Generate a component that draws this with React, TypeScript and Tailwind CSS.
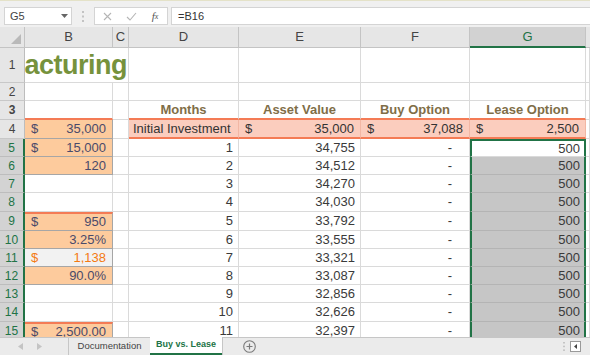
import React from 'react';

const font = "font-['Liberation_Sans',Arial,sans-serif]";

type RowDef = {
  n: number;
  h: string;
  b?: { kind: 'acc' | 'num'; v: string; style: 'in' | 'calc'; topRed?: boolean } | null;
  d?: string;
  e?: string;
};

const rows: RowDef[] = [
  { n: 5, h: 'h-[18px]', b: { kind: 'acc', v: '15,000', style: 'in' }, d: '1', e: '34,755' },
  { n: 6, h: 'h-[18px]', b: { kind: 'num', v: '120', style: 'in' }, d: '2', e: '34,512' },
  { n: 7, h: 'h-[18px]', b: null, d: '3', e: '34,270' },
  { n: 8, h: 'h-[19px]', b: null, d: '4', e: '34,030' },
  { n: 9, h: 'h-[19px]', b: { kind: 'acc', v: '950', style: 'in', topRed: true }, d: '5', e: '33,792' },
  { n: 10, h: 'h-[18px]', b: { kind: 'num', v: '3.25%', style: 'in' }, d: '6', e: '33,555' },
  { n: 11, h: 'h-[18px]', b: { kind: 'acc', v: '1,138', style: 'calc' }, d: '7', e: '33,321' },
  { n: 12, h: 'h-[18px]', b: { kind: 'num', v: '90.0%', style: 'in' }, d: '8', e: '33,087' },
  { n: 13, h: 'h-[18px]', b: null, d: '9', e: '32,856' },
  { n: 14, h: 'h-[19px]', b: null, d: '10', e: '32,626' },
  { n: 15, h: 'h-[19px]', b: { kind: 'acc', v: '2,500.00', style: 'in', topRed: true }, d: '11', e: '32,397' },
];

function RowHead({ n, sel }: { n: number; sel?: boolean }) {
  return (
    <div
      className={`w-[25px] shrink-0 h-full flex items-center justify-center text-[12px] border-b ${
        sel
          ? 'bg-[#d3d3d3] text-[#217346] border-b-[#bdbdbd] border-r-2 border-r-[#217346]'
          : 'bg-[#e6e6e6] text-[#444] border-b-[#c8c8c8] border-r border-r-[#bdbdbd]'
      }`}
    >
      {n}
    </div>
  );
}

function Blank({ w }: { w: string }) {
  return <div className={`${w} shrink-0 h-full border-r border-b border-[#dadada]`} />;
}

function Dollar({ v, color }: { v: string; color: string }) {
  return (
    <div className={`flex w-full justify-between items-center ${color}`}>
      <span>$</span>
      <span>{v}</span>
    </div>
  );
}

function BCell({ b }: { b: RowDef['b'] }) {
  if (!b) return <Blank w="w-[88px]" />;
  const bg = b.style === 'calc' ? 'bg-[#f2f2f2]' : 'bg-[#fdcb9d]';
  const color = b.style === 'calc' ? 'text-[#f47a12]' : 'text-[#4a4a6a]';
  return (
    <div
      className={`w-[88px] shrink-0 h-full flex items-center px-[6px] border-r border-b border-r-[#a6a6a6] border-b-[#a6a6a6] ${bg} ${color} ${
        b.topRed ? 'border-t-2 border-t-[#f47b55]' : ''
      }`}
    >
      {b.kind === 'acc' ? (
        <Dollar v={b.v} color={color} />
      ) : (
        <span className="ml-auto">{b.v}</span>
      )}
    </div>
  );
}

function NumCell({ w, v, pr }: { w: string; v?: string; pr?: string }) {
  return (
    <div className={`${w} shrink-0 h-full flex items-center justify-end border-r border-b border-[#dadada] text-[#3a3a3a] ${pr ?? 'pr-[5px]'}`}>
      {v}
    </div>
  );
}

export default function App() {
  return (
    <div className={`w-[590px] h-[355px] overflow-hidden bg-white ${font} text-[13px] select-none`}>
      {/* formula bar */}
      <div className="h-[27px] bg-[#f0f0f0] border-t border-t-[#e4e2c8] flex items-start pt-[6px] pl-[4px]">
        <div className="w-[68px] h-[18px] bg-white border border-[#d4d4d4] flex items-center pl-[5px] pr-[3px] text-[11px] text-[#444]">
          <span>G5</span>
          <svg className="ml-auto" width="7" height="4" viewBox="0 0 7 4">
            <path d="M0 0 L7 0 L3.5 4 Z" fill="#666" />
          </svg>
        </div>
        <div className="w-[22px] h-[18px] flex items-center justify-center">
          <svg width="2" height="11" viewBox="0 0 2 11">
            <rect x="0" y="0" width="2" height="2" fill="#c3c3c3" />
            <rect x="0" y="4.5" width="2" height="2" fill="#c3c3c3" />
            <rect x="0" y="9" width="2" height="2" fill="#c3c3c3" />
          </svg>
        </div>
        <div className="w-[74px] h-[18px] bg-white border border-[#d4d4d4] flex items-center">
          <div className="w-[24px] flex justify-center">
            <svg width="9" height="9" viewBox="0 0 9 9">
              <path d="M1 1 L8 8 M8 1 L1 8" stroke="#b5b5b5" strokeWidth="1.1" />
            </svg>
          </div>
          <div className="w-[24px] flex justify-center">
            <svg width="11" height="9" viewBox="0 0 11 9">
              <path d="M1 5 L4 8 L10 1" stroke="#b5b5b5" strokeWidth="1.1" fill="none" />
            </svg>
          </div>
          <div className="w-[24px] flex justify-center text-[11px] italic text-[#555] font-['Liberation_Serif',serif]">
            f<span className="text-[8px] mt-[3px]">x</span>
          </div>
        </div>
        <div className="ml-[3px] flex-1 h-[18px] bg-white border-y border-l border-[#d4d4d4] flex items-center pl-[6px] text-[11px] text-[#333]">
          =B16
        </div>
      </div>

      {/* grid */}
      <div className="h-[310px] overflow-hidden">
        {/* column headers */}
        <div className="h-[21px] flex bg-[#e6e6e6] text-[#444] text-[13px]">
          <div className="w-[25px] shrink-0 h-full border-r border-b border-[#c4c4c4] flex items-end justify-end pr-[3px] pb-[3px]">
            <svg width="10" height="10" viewBox="0 0 10 10">
              <path d="M10 0 L10 10 L0 10 Z" fill="#b9b9b9" />
            </svg>
          </div>
          <div className="w-[88px] shrink-0 h-full border-r border-b border-[#c4c4c4] flex items-center justify-center">B</div>
          <div className="w-[16px] shrink-0 h-full border-r border-b border-[#c4c4c4] flex items-center justify-center">C</div>
          <div className="w-[110px] shrink-0 h-full border-r border-b border-[#c4c4c4] flex items-center justify-center">D</div>
          <div className="w-[122px] shrink-0 h-full border-r border-b border-[#c4c4c4] flex items-center justify-center">E</div>
          <div className="w-[109px] shrink-0 h-full border-r border-b border-[#c4c4c4] flex items-center justify-center">F</div>
          <div className="w-[116px] shrink-0 h-full bg-[#d2d2d2] border-r border-r-[#c4c4c4] border-b-2 border-b-[#217346] text-[#217346] flex items-center justify-center">G</div>
          <div className="flex-1 h-full border-b border-[#c4c4c4]" />
        </div>

        {/* row 1 */}
        <div className="h-[35px] flex">
          <RowHead n={1} />
          <div className="w-[104px] shrink-0 h-full border-r border-b border-[#dadada] overflow-hidden flex justify-end items-end">
            <span className="whitespace-nowrap text-[27px] tracking-[-0.5px] leading-[33px] font-bold text-[#76923c] mr-[1px]">acturing</span>
          </div>
          <Blank w="w-[110px]" />
          <Blank w="w-[122px]" />
          <Blank w="w-[109px]" />
          <Blank w="w-[116px]" />
          <Blank w="flex-1" />
        </div>

        {/* row 2 */}
        <div className="h-[18px] flex">
          <RowHead n={2} />
          <Blank w="w-[88px]" />
          <Blank w="w-[16px]" />
          <Blank w="w-[110px]" />
          <Blank w="w-[122px]" />
          <Blank w="w-[109px]" />
          <Blank w="w-[116px]" />
          <Blank w="flex-1" />
        </div>

        {/* row 3 */}
        <div className="h-[19px] flex font-bold text-[#7f6e47]">
          <RowHead n={3} />
          <div className="w-[88px] shrink-0 h-full border-r border-[#dadada] border-b-2 border-b-[#f47b55]" />
          <Blank w="w-[16px]" />
          {['Months', 'Asset Value', 'Buy Option', 'Lease Option'].map((t, i) => (
            <div
              key={t}
              className={`${['w-[110px]', 'w-[122px]', 'w-[109px]', 'w-[116px]'][i]} shrink-0 h-full flex items-center justify-center border-r border-r-[#dadada] border-b-2 border-b-[#f47b55]`}
            >
              {t}
            </div>
          ))}
          <Blank w="flex-1" />
        </div>

        {/* row 4 */}
        <div className="h-[19px] flex">
          <RowHead n={4} />
          <div className="w-[88px] shrink-0 h-full flex items-center px-[6px] bg-[#fdcb9d] border-r border-b border-[#a6a6a6]">
            <Dollar v="35,000" color="text-[#4a4a6a]" />
          </div>
          <Blank w="w-[16px]" />
          <div className="w-[110px] shrink-0 h-full flex items-center pl-[4px] bg-[#fbcdbe] text-[#333] border-r border-r-[#f2b7a4] border-b-2 border-b-[#f47b55]">
            Initial Investment
          </div>
          <div className="w-[122px] shrink-0 h-full flex items-center px-[6px] bg-[#fbcdbe] border-r border-r-[#f2b7a4] border-b-2 border-b-[#f47b55]">
            <Dollar v="35,000" color="text-[#333]" />
          </div>
          <div className="w-[109px] shrink-0 h-full flex items-center px-[6px] bg-[#fbcdbe] border-r border-r-[#f2b7a4] border-b-2 border-b-[#f47b55]">
            <Dollar v="37,088" color="text-[#333]" />
          </div>
          <div className="w-[116px] shrink-0 h-full flex items-center px-[6px] bg-[#fbcdbe] border-r border-r-[#f2b7a4] border-b-2 border-b-[#f47b55]">
            <Dollar v="2,500" color="text-[#333]" />
          </div>
          <Blank w="flex-1" />
        </div>

        {rows.map((r) => (
          <div key={r.n} className={`${r.h} flex`}>
            <RowHead n={r.n} sel />
            <BCell b={r.b} />
            <Blank w="w-[16px]" />
            <NumCell w="w-[110px]" v={r.d} />
            <NumCell w="w-[122px]" v={r.e} />
            <NumCell w="w-[109px]" v="-" pr="pr-[17px]" />
            <div
              className={`w-[116px] shrink-0 h-full flex items-center justify-end pr-[4px] text-[#3a3a3a] border-x-2 border-x-[#217346] border-b ${
                r.n === 5 ? 'bg-white border-t-2 border-t-[#217346] border-b-[#dadada]' : 'bg-[#c6c6c6] border-b-[#b4b4b4]'
              }`}
            >
              500
            </div>
            <Blank w="flex-1" />
          </div>
        ))}
      </div>

      {/* sheet tabs */}
      <div className="h-[18px] flex items-stretch bg-[#ebebeb] border-t border-[#c6c6c6] text-[9.5px] text-[#444] whitespace-nowrap">
        <div className="w-[68px] shrink-0 flex items-center pl-[18px] gap-[14px]">
          <svg width="5" height="7" viewBox="0 0 5 7">
            <path d="M5 0 L0 3.5 L5 7 Z" fill="#c4c4c4" />
          </svg>
          <svg width="5" height="7" viewBox="0 0 5 7">
            <path d="M0 0 L5 3.5 L0 7 Z" fill="#c4c4c4" />
          </svg>
        </div>
        <div className="w-[82px] shrink-0 flex items-center justify-center border-l border-[#c6c6c6]">Documentation</div>
        <div className="w-[72px] shrink-0 flex items-center justify-center bg-white text-[#217346] text-[9px] font-bold border-b-2 border-[#217346] -mt-px">
          Buy vs. Lease
        </div>
        <div className="w-[54px] shrink-0 flex items-center justify-center border-l border-[#c6c6c6]">
          <svg width="13" height="13" viewBox="0 0 13 13">
            <circle cx="6.5" cy="6.5" r="5.8" fill="none" stroke="#7a7a7a" strokeWidth="1.1" />
            <path d="M6.5 3.5 V9.5 M3.5 6.5 H9.5" stroke="#7a7a7a" strokeWidth="1.2" />
          </svg>
        </div>
        <div className="flex-1" />
        <div className="w-[10px] flex items-center justify-center">
          <svg width="2" height="9" viewBox="0 0 2 9">
            <rect x="0" y="0" width="2" height="1.5" fill="#c4c4c4" />
            <rect x="0" y="3.7" width="2" height="1.5" fill="#c4c4c4" />
            <rect x="0" y="7.4" width="2" height="1.5" fill="#c4c4c4" />
          </svg>
        </div>
        <div className="w-[21px] flex items-center justify-start pl-[1px]">
          <div className="w-[11px] h-[11px] bg-white border border-[#9a9a9a] flex items-center justify-center">
            <svg width="3" height="5" viewBox="0 0 3 5">
              <path d="M3 0 L0 2.5 L3 5 Z" fill="#444" />
            </svg>
          </div>
        </div>
      </div>
    </div>
  );
}
